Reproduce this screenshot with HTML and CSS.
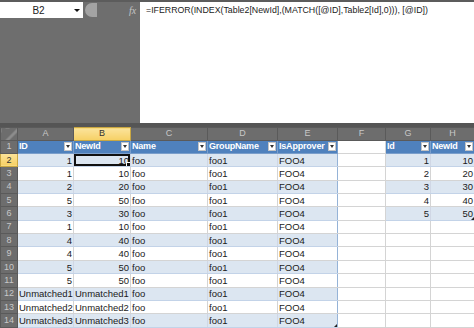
FILE: index.html
```html
<!DOCTYPE html>
<html lang="en">
<head>
    <meta charset="UTF-8">
    <title>Excel - Table lookup</title>
    <link rel="stylesheet" href="styles.css">
</head>
<body>

<div class="formula-bar">
    <div class="name-side">
        <div class="name-row">
            <div class="name-box"><span class="name-text">B2</span><span class="name-arrow"></span></div>
            <div class="grip"></div>
            <div class="fx">fx</div>
        </div>
    </div>
    <div class="formula">=IFERROR(INDEX(Table2[NewId],(MATCH([@ID],Table2[Id],0))), [@ID])</div>
</div>
<div class="splitter"></div>

<table class="sheet">
    <colgroup>
        <col class="w-rh"><col class="w-a"><col class="w-b"><col class="w-c"><col class="w-d">
        <col class="w-e"><col class="w-f"><col class="w-g"><col class="w-h">
    </colgroup>
    <tr class="col-heads">
        <td class="corner"></td>
        <td class="ch">A</td>
        <td class="ch active">B</td>
        <td class="ch">C</td>
        <td class="ch">D</td>
        <td class="ch">E</td>
        <td class="ch">F</td>
        <td class="ch">G</td>
        <td class="ch">H</td>
    </tr>
    <tr>
        <td class="rh">1</td>
        <td class="th"><div class="hd">ID<span class="dd"></span></div></td>
        <td class="th"><div class="hd">NewId<span class="dd"></span></div></td>
        <td class="th"><div class="hd">Name<span class="dd"></span></div></td>
        <td class="th"><div class="hd">GroupName<span class="dd"></span></div></td>
        <td class="th"><div class="hd">IsApprover<span class="dd"></span></div></td>
        <td class="x"></td>
        <td class="th t2"><div class="hd">Id<span class="dd"></span></div></td>
        <td class="th"><div class="hd">NewId<span class="dd"></span></div></td>
    </tr>
    <tr class="band">
        <td class="rh active">2</td>
        <td class="n">1</td>
        <td class="n sel">10</td>
        <td>foo</td>
        <td>foo1</td>
        <td class="edge">FOO4</td>
        <td class="x"></td>
        <td class="n t2">1</td>
        <td class="n">10</td>
    </tr>
    <tr>
        <td class="rh">3</td>
        <td class="n">1</td>
        <td class="n">10</td>
        <td>foo</td>
        <td>foo1</td>
        <td class="edge">FOO4</td>
        <td class="x"></td>
        <td class="n t2">2</td>
        <td class="n">20</td>
    </tr>
    <tr class="band">
        <td class="rh">4</td>
        <td class="n">2</td>
        <td class="n">20</td>
        <td>foo</td>
        <td>foo1</td>
        <td class="edge">FOO4</td>
        <td class="x"></td>
        <td class="n t2">3</td>
        <td class="n">30</td>
    </tr>
    <tr>
        <td class="rh">5</td>
        <td class="n">5</td>
        <td class="n">50</td>
        <td>foo</td>
        <td>foo1</td>
        <td class="edge">FOO4</td>
        <td class="x"></td>
        <td class="n t2">4</td>
        <td class="n">40</td>
    </tr>
    <tr class="band">
        <td class="rh">6</td>
        <td class="n">3</td>
        <td class="n">30</td>
        <td>foo</td>
        <td>foo1</td>
        <td class="edge">FOO4</td>
        <td class="x"></td>
        <td class="n t2">5</td>
        <td class="n resize">50</td>
    </tr>
    <tr>
        <td class="rh">7</td>
        <td class="n">1</td>
        <td class="n">10</td>
        <td>foo</td>
        <td>foo1</td>
        <td class="edge">FOO4</td>
        <td class="x"></td>
        <td class="x"></td>
        <td class="x"></td>
    </tr>
    <tr class="band">
        <td class="rh">8</td>
        <td class="n">4</td>
        <td class="n">40</td>
        <td>foo</td>
        <td>foo1</td>
        <td class="edge">FOO4</td>
        <td class="x"></td>
        <td class="x"></td>
        <td class="x"></td>
    </tr>
    <tr>
        <td class="rh">9</td>
        <td class="n">4</td>
        <td class="n">40</td>
        <td>foo</td>
        <td>foo1</td>
        <td class="edge">FOO4</td>
        <td class="x"></td>
        <td class="x"></td>
        <td class="x"></td>
    </tr>
    <tr class="band">
        <td class="rh">10</td>
        <td class="n">5</td>
        <td class="n">50</td>
        <td>foo</td>
        <td>foo1</td>
        <td class="edge">FOO4</td>
        <td class="x"></td>
        <td class="x"></td>
        <td class="x"></td>
    </tr>
    <tr>
        <td class="rh">11</td>
        <td class="n">5</td>
        <td class="n">50</td>
        <td>foo</td>
        <td>foo1</td>
        <td class="edge">FOO4</td>
        <td class="x"></td>
        <td class="x"></td>
        <td class="x"></td>
    </tr>
    <tr class="band">
        <td class="rh">12</td>
        <td>Unmatched1</td>
        <td>Unmatched1</td>
        <td>foo</td>
        <td>foo1</td>
        <td class="edge">FOO4</td>
        <td class="x"></td>
        <td class="x"></td>
        <td class="x"></td>
    </tr>
    <tr>
        <td class="rh">13</td>
        <td>Unmatched2</td>
        <td>Unmatched2</td>
        <td>foo</td>
        <td>foo1</td>
        <td class="edge">FOO4</td>
        <td class="x"></td>
        <td class="x"></td>
        <td class="x"></td>
    </tr>
    <tr class="band">
        <td class="rh">14</td>
        <td>Unmatched3</td>
        <td>Unmatched3</td>
        <td>foo</td>
        <td>foo1</td>
        <td class="edge resize">FOO4</td>
        <td class="x"></td>
        <td class="x"></td>
        <td class="x"></td>
    </tr>
</table>

</body>
</html>
```

FILE: styles.css
```css
body {
    margin: 0;
    padding: 0;
    width: 474px;
    height: 328px;
    overflow: hidden;
    background-color: white;
    font-family: "Liberation Sans", Arial, sans-serif;
    font-size: 9.5px;
    color: #1a1a1a;
}

/* formula bar */

.formula-bar {
    display: flex;
    height: 121px;
    border-top: 2px solid #5c5c5c;
}

.name-side {
    width: 140px;
    background-color: #6e6e6e;
}

.name-row {
    display: flex;
    align-items: center;
    height: 16px;
}

.name-box {
    display: flex;
    align-items: center;
    width: 83px;
    height: 16px;
    background-color: white;
    color: #222;
    font-size: 10px;
}

.name-text {
    flex: 1;
    text-align: center;
    padding-left: 3px;
}

.name-arrow {
    width: 0;
    height: 0;
    margin-right: 3px;
    border-left: 3px solid transparent;
    border-right: 3px solid transparent;
    border-top: 3px solid #111;
}

.grip {
    width: 12px;
    height: 14px;
    margin-left: 2px;
    background-color: #a3a3a3;
    border-radius: 7px 0 0 7px;
}

.fx {
    margin-left: 32px;
    color: #c4c4c4;
    font-family: "Liberation Serif", serif;
    font-style: italic;
    font-size: 10px;
}

.formula {
    flex: 1;
    background-color: white;
    padding: 3px 6px;
    font-size: 8.8px;
    color: #222;
    white-space: nowrap;
    overflow: hidden;
}

.splitter {
    height: 4px;
    background-color: #555;
}

/* grid */

.sheet {
    border-collapse: collapse;
    table-layout: fixed;
    width: 474px;
}

.w-rh { width: 17px; }
.w-a { width: 56px; }
.w-b { width: 57px; }
.w-c { width: 77px; }
.w-d { width: 70px; }
.w-e { width: 60px; }
.w-f { width: 48px; }
.w-g { width: 45px; }
.w-h { width: 44px; }

.sheet tr {
    height: 13.36px;
}

.sheet tr.col-heads {
    height: 12.6px;
}

.sheet td {
    padding: 0 1px;
    border: 1px solid #d4d4d4;
    line-height: 11px;
    white-space: nowrap;
    overflow: hidden;
    background-color: white;
}

.sheet tr.band td {
    background-color: #dce6f1;
    border-color: #c3d3e8 #d0d7e5;
}

.sheet td.n {
    text-align: right;
}

.sheet .corner,
.sheet .ch,
.sheet .rh {
    background-color: #6d6d6d;
    border-color: #5a5a5a;
    color: #c8c8c8;
    text-align: center;
    font-size: 9px;
}

.sheet tr.band td.rh {
    background-color: #6d6d6d;
    border-color: #5a5a5a;
}

.sheet .corner {
    background: linear-gradient(135deg, #6d6d6d 55%, #8c8c8c 56%, #8c8c8c 70%, #6d6d6d 71%);
}

.sheet .ch.active,
.sheet tr.band td.rh.active {
    background: linear-gradient(#fbe39b, #f6d064);
    color: #333;
    border-color: #c9a742;
}

.sheet tr.band td.x,
.sheet td.x {
    background-color: white;
    border-color: #d4d4d4;
}

.sheet td.th {
    background-color: #4f81bd;
    border-color: #7a9ecb;
    color: white;
    font-weight: bold;
    font-size: 9px;
    letter-spacing: -0.2px;
}

.hd {
    display: flex;
    align-items: center;
    justify-content: space-between;
    overflow: hidden;
}

.dd {
    flex: none;
    width: 8px;
    height: 9px;
    background-color: white;
    border: 1px solid #c4c4c4;
    box-sizing: border-box;
}

.dd::after {
    content: "";
    display: block;
    width: 0;
    margin: 2px auto 0;
    border-left: 2.5px solid transparent;
    border-right: 2.5px solid transparent;
    border-top: 3px solid #333;
}

.sheet td.edge,
.sheet tr.band td.edge {
    border-right-color: #95b3d7;
}

.sheet td.t2,
.sheet tr.band td.t2 {
    border-left-color: #95b3d7;
}

.sheet td.sel {
    position: relative;
    box-shadow: inset 0 0 0 2px #111;
}

.sheet td.sel::after {
    content: "";
    position: absolute;
    right: -2px;
    bottom: -2px;
    width: 4px;
    height: 4px;
    background-color: #111;
    border: 1px solid white;
}

.sheet td.resize {
    position: relative;
}

.sheet td.resize::after {
    content: "";
    position: absolute;
    right: 0;
    bottom: 0;
    width: 0;
    height: 0;
    border-left: 3px solid transparent;
    border-bottom: 3px solid #222;
}
```
